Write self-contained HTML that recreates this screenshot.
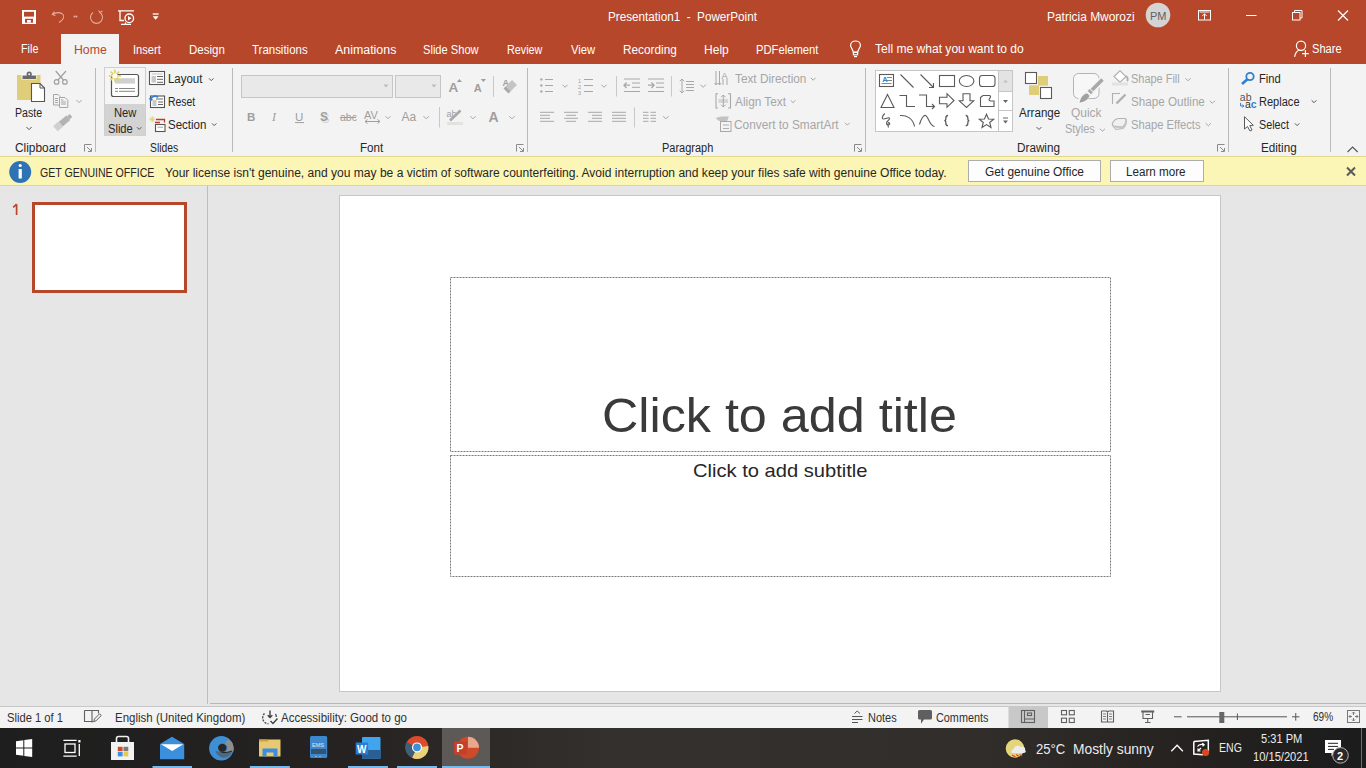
<!DOCTYPE html>
<html><head><meta charset="utf-8">
<style>
*{margin:0;padding:0;box-sizing:border-box}
html,body{width:1366px;height:768px;overflow:hidden;font-family:"Liberation Sans",sans-serif;background:#e6e6e6;position:relative}
.a{position:absolute}
.t{position:absolute;white-space:pre;transform-origin:0 0}
#title{left:0;top:0;width:1366px;height:64px;background:#b7472a}
#hometab{left:61px;top:34px;width:58px;height:30px;background:#f3f3f3}
#ribbon{left:0;top:64px;width:1366px;height:92px;background:#f3f3f3}
#gen{left:0;top:156px;width:1366px;height:30px;background:#fbf5b6;border-top:1px solid #e3d78c;border-bottom:1px solid #e3d78c}
#pane{left:0;top:186px;width:208px;height:520px;background:#e6e6e6}
#slide{left:339px;top:195px;width:882px;height:497px;background:#fff;border:1px solid #c6c6c6}
#status{left:0;top:706px;width:1366px;height:22px;background:#f3f3f3;border-top:1px solid #c8c8c8}
#task{left:0;top:728px;width:1366px;height:40px;background:linear-gradient(90deg,#1e1e1e 0%,#252221 25%,#33302d 45%,#322e2b 70%,#262321 85%,#1c1c1c 100%)}

</style></head><body>
<div class="a" id="title"></div>
<div class="a" id="hometab"></div>
<div class="a" id="ribbon"></div>
<div class="a" id="gen"></div>
<div class="a" id="pane"></div>
<div class="a" id="slide"></div>
<div class="a" id="status"></div>
<div class="a" id="task"></div>

<svg class="a" style="left:0;top:0" width="1366" height="768" viewBox="0 0 1366 768">
<g id="qat">
<rect x="22" y="10" width="14" height="14" fill="#fff"/>
<rect x="24" y="11.8" width="10" height="4.8" fill="#b7472a"/>
<rect x="25" y="18.8" width="8" height="3.9" fill="#b7472a"/>
<rect x="27" y="20" width="3.8" height="2.7" fill="#fff"/>
<g fill="none" stroke="#fff" stroke-opacity="0.55" stroke-width="1.1">
<path d="M52 14.5 L54.5 11.5 M52 14.5 L55.5 15.5 M52.5 14.3 C56 12 61 12 63 14.5 C65 17 63 20 59 22.5"/>
<circle cx="74.5" cy="16.5" r="0.5"/><circle cx="76.5" cy="16.5" r="0.5"/>
<path d="M93 12.5 A6 6 0 1 0 100 12.5 M98.5 10.5 L100 12.5 L102.5 11"/>
</g>
<g fill="none" stroke="#fff" stroke-width="1.3">
<path d="M118 10.8 H134 M120 11 V20.5 H124"/>
<circle cx="129.3" cy="18.3" r="4.3"/>
<path d="M121 24.3 H131 M125.5 22.5 V24"/>
</g>
<path d="M128 16 L131.5 18.3 L128 20.6 Z" fill="#fff"/>
<path d="M152.7 14 H158.6" stroke="#fff" stroke-width="1.3"/>
<path d="M152.7 16.2 H158.6 L155.65 19.8 Z" fill="#fff"/>
</g>
<g id="winctl">
<circle cx="1158" cy="15" r="12.3" fill="#d4d4d4"/>
<g fill="none" stroke="#fff" stroke-width="1">
<rect x="1198.5" y="10.5" width="12" height="9.5"/>
<path d="M1199.5 12 H1209.5"/>
<path d="M1204.5 19.5 V13.8 M1202.3 16 L1204.5 13.8 L1206.7 16"/>
<path d="M1246 15.5 H1256.5"/>
<rect x="1292.5" y="12.5" width="7.5" height="7.5"/>
<path d="M1294.5 12.5 V10.5 H1302 V18 H1300"/>
<path d="M1338 10.5 L1348 20.5 M1348 10.5 L1338 20.5" stroke-width="1.2"/>
</g>
</g>
<g id="tellshare" fill="none" stroke="#fff" stroke-width="1.2">
<path d="M853.3 52.2 C853 49.5 850.6 48 850.6 45.2 C850.6 42.7 852.8 41 855.5 41 C858.2 41 860.4 42.7 860.4 45.2 C860.4 48 858 49.5 857.7 52.2 Z"/>
<rect x="853.4" y="52.4" width="4.2" height="2.4"/>
<path d="M854 56.6 H857"/>
<circle cx="1301" cy="45.7" r="4.6"/>
<path d="M1294.6 56.8 C1295.2 53 1297 50.8 1299.5 50"/>
<path d="M1302 53.6 H1308.8 M1305.4 50 V57"/>
</g>
<path d="M95.5 68 V152" stroke="#b9b9b9" stroke-width="1"/>
<path d="M232.5 68 V152" stroke="#b9b9b9" stroke-width="1"/>
<path d="M527.5 68 V152" stroke="#b9b9b9" stroke-width="1"/>
<path d="M865.5 68 V152" stroke="#b9b9b9" stroke-width="1"/>
<path d="M1228.5 68 V152" stroke="#b9b9b9" stroke-width="1"/>
<path d="M1330.5 68 V152" stroke="#b9b9b9" stroke-width="1"/>
<g id="clip">
<rect x="17" y="75" width="23.5" height="25" fill="#e0cd7a"/>
<rect x="21.5" y="74.5" width="15" height="5" fill="#fff"/>
<rect x="22.5" y="75.5" width="13.5" height="3.5" fill="#6a6a6a"/>
<circle cx="29.2" cy="74.2" r="2.6" fill="#6a6a6a"/>
<circle cx="29.2" cy="74.2" r="1" fill="#f3f3f3"/>
<path d="M31.5 83.5 H40 L44.5 88 V101.5 H31.5 Z" fill="#fff" stroke="#555555" stroke-width="1.1"/>
<path d="M40 83.5 V88 H44.5" fill="none" stroke="#555555" stroke-width="1"/>
<path d="M26.4 126.97500000000001 L29.049999999999997 129.625 L31.7 126.97500000000001" fill="none" stroke="#555555" stroke-width="1.0"/>
<g fill="none" stroke="#a0a0a0" stroke-width="1.2">
<circle cx="56.6" cy="81.9" r="2.3"/><circle cx="64.9" cy="81.9" r="2.3"/>
<path d="M58 80 L66 71 M63.5 80 L55.7 71"/>
</g>
<g fill="#f3f3f3" stroke="#a6a6a6" stroke-width="1">
<path d="M53.5 94.5 H58 L60 96.5 V105 H53.5 Z"/>
<path d="M59.5 97.5 H65 L67.8 100.3 V107.5 H59.5 Z"/>
<path d="M55 98.5 H58 M55 100.5 H58 M55 102.5 H58 M61 102 H66 M61 104 H66 M61 100 H63.5" />
</g>
<path d="M76.4 99.975 L79.05000000000001 102.625 L81.7 99.975" fill="none" stroke="#a6a6a6" stroke-width="1.0"/>
<g transform="translate(61.5,123.5) rotate(-40)">
<rect x="-1" y="-3" width="10" height="6" fill="#b3b3b3"/>
<rect x="9" y="-2" width="3.5" height="4" fill="#b3b3b3"/>
<rect x="-8" y="-3.5" width="7" height="7" fill="#d0d0d0"/>
</g>
<g fill="none" stroke="#8a8a8a" stroke-width="1"><path d="M84.5 151.5 V144.5 H91.5"/><path d="M87 147 L91 151 M91.5 148 V151.5 H88"/></g>
</g>
<g id="slides">
<rect x="104.5" y="67.5" width="41" height="68" fill="#f5f5f5" stroke="#cfcfcf" stroke-width="1"/>
<rect x="105" y="104" width="40" height="31.5" fill="#d3d3d3"/>
<rect x="111.5" y="74.5" width="27" height="22" rx="2" fill="#fff" stroke="#555555" stroke-width="1.2"/>
<rect x="115" y="78.2" width="20" height="5.4" fill="#d0d0d0"/>
<path d="M115 88.5 H118 M119 88.5 H135 M115 91.3 H118 M119 91.3 H135" stroke="#777" stroke-width="0.9"/>
<g stroke="#e3d56a" stroke-width="1.8">
<path d="M114.9 69.8 V81.8 M108.9 75.8 H120.9 M110.7 71.6 L119.1 80 M119.1 71.6 L110.7 80"/>
</g>
<circle cx="114.9" cy="75.8" r="2.5" fill="#fff"/>
<path d="M137 127.22500000000001 L139.15 129.375 L141.3 127.22500000000001" fill="none" stroke="#555555" stroke-width="1.0"/>
<rect x="149.5" y="71.5" width="15" height="13" fill="#fff" stroke="#555555" stroke-width="1.1"/>
<path d="M151.5 74 H162.5" stroke="#bdbdbd" stroke-width="1"/>
<rect x="151.5" y="76" width="4.5" height="6.5" fill="#c8c8c8"/>
<path d="M157 76.5 H163 M157 79.3 H163 M157 82.3 H163" stroke="#555555" stroke-width="0.9"/>
<path d="M209 78.375 L211.25 80.625 L213.5 78.375" fill="none" stroke="#555555" stroke-width="1.0"/>
<rect x="150.5" y="96" width="14" height="11.5" fill="#fff" stroke="#555555" stroke-width="1.1"/>
<rect x="152.5" y="100" width="4" height="6" fill="#c8c8c8"/>
<path d="M158 102 H163 M158 104.5 H163 M156 99 H163" stroke="#555555" stroke-width="0.9"/>
<path d="M150.5 100 C151.5 96.5 155 95 158 97.3" fill="none" stroke="#2f7fd0" stroke-width="1.6"/>
<path d="M149 97.8 L150.3 101.5 L153.2 99.5 Z" fill="#2f7fd0"/>
<g stroke="#e3d56a" stroke-width="1"><path d="M152.3 116.3 V122.3 M149.3 119.3 H155.3 M150.2 117.2 L154.4 121.4 M154.4 117.2 L150.2 121.4"/></g>
<path d="M156 119.5 H164.5 V122.5 M155 122.5 H160" fill="none" stroke="#c0392b" stroke-width="1.3"/>
<rect x="155.5" y="124.5" width="9.5" height="7" fill="#fff" stroke="#555555" stroke-width="1.1"/>
<path d="M157.5 127.3 H163" stroke="#c0c0c0" stroke-width="1.5"/>
<path d="M212 123.4 L214.2 125.6 L216.4 123.4" fill="none" stroke="#555555" stroke-width="1.0"/>
</g>
<g id="font">
<rect x="241.5" y="75.5" width="151" height="22" fill="#e9e9e9" stroke="#c6c6c6"/>
<path d="M383.5 84.5 H388.5 L386 87.5 Z" fill="#bcbcbc"/>
<rect x="395.5" y="75.5" width="45" height="22" fill="#e9e9e9" stroke="#c6c6c6"/>
<path d="M431.5 84.5 H436.5 L434 87.5 Z" fill="#bcbcbc"/>
<text x="448.6" y="92" font-family="Liberation Sans" font-size="13.5" fill="#9e9e9e" font-weight="bold">A</text>
<path d="M456.8 82 H462 L459.4 79 Z" fill="#9e9e9e"/>
<text x="473.8" y="92" font-family="Liberation Sans" font-size="11" fill="#9e9e9e" font-weight="bold">A</text>
<path d="M480.8 79 H486 L483.4 82 Z" fill="#9e9e9e"/>
<path d="M493.5 76 V97" stroke="#c8c8c8" stroke-width="1"/>
<text x="502.5" y="86" font-family="Liberation Sans" font-size="9" fill="#9e9e9e" font-weight="bold">A</text>
<g transform="translate(511,86) rotate(-45)"><rect x="-4" y="-3.5" width="9" height="7" fill="#c4c4c4"/><rect x="-7" y="-3.5" width="3" height="7" fill="#a8a8a8"/></g>
<text x="247" y="121" font-family="Liberation Sans" font-size="11.5" fill="#9e9e9e" font-weight="bold">B</text>
<text x="272" y="121" font-family="Liberation Serif" font-style="italic" font-size="12" fill="#9e9e9e">I</text>
<text x="295" y="120.5" font-family="Liberation Sans" font-size="11.5" fill="#9e9e9e" >U</text>
<path d="M295 122.6 H304" stroke="#9e9e9e" stroke-width="1"/>
<text x="321.5" y="122.5" font-family="Liberation Sans" font-size="12" fill="#b0b0b0" fill-opacity="0.5">S</text>
<text x="320" y="121" font-family="Liberation Sans" font-size="12" fill="#9e9e9e" font-weight="bold">S</text>
<text x="340" y="121" font-family="Liberation Sans" font-size="10.5" fill="#9e9e9e" >abc</text>
<path d="M340 117.5 H356" stroke="#9e9e9e" stroke-width="1"/>
<text x="364" y="119" font-family="Liberation Sans" font-size="11" fill="#9e9e9e" >AV</text>
<path d="M365 121.5 H380 M367.5 119.5 L365 121.5 L367.5 123.5 M377.5 119.5 L380 121.5 L377.5 123.5" fill="none" stroke="#9e9e9e" stroke-width="1"/>
<path d="M385.6 116.275 L388.05 118.725 L390.5 116.275" fill="none" stroke="#a6a6a6" stroke-width="1.0"/>
<text x="401.5" y="121" font-family="Liberation Sans" font-size="12" fill="#9e9e9e" >Aa</text>
<path d="M423.5 116.125 L426.25 118.875 L429 116.125" fill="none" stroke="#a6a6a6" stroke-width="1.0"/>
<path d="M439.5 107 V127.5" stroke="#c8c8c8" stroke-width="1"/>
<text x="446.5" y="117" font-family="Liberation Sans" font-size="9" fill="#9e9e9e" >ab</text>
<path d="M450 120.5 L460.5 110.5" stroke="#a8a8a8" stroke-width="2.6"/>
<rect x="447" y="122" width="16" height="3" fill="#e2e2e2"/>
<path d="M470.3 116.15 L473.0 118.85 L475.7 116.15" fill="none" stroke="#a6a6a6" stroke-width="1.0"/>
<text x="488.5" y="122" font-family="Liberation Sans" font-size="14" fill="#9e9e9e" font-weight="bold">A</text>
<path d="M509.2 116.14999999999999 L511.9 118.85000000000001 L514.6 116.14999999999999" fill="none" stroke="#a6a6a6" stroke-width="1.0"/>
<g fill="none" stroke="#8a8a8a" stroke-width="1"><path d="M516.5 151.5 V144.5 H523.5"/><path d="M519 147 L523 151 M523.5 148 V151.5 H520"/></g>
</g>
<g id="para">
<circle cx="541.4" cy="79.4" r="1.2" fill="#a8a8a8"/><circle cx="541.4" cy="85.5" r="1.2" fill="#a8a8a8"/><circle cx="541.4" cy="91.5" r="1.2" fill="#a8a8a8"/>
<path d="M545 79.5 H553" stroke="#a8a8a8" stroke-width="1.0"/><path d="M545 85.5 H553" stroke="#a8a8a8" stroke-width="1.0"/><path d="M545 91.5 H553" stroke="#a8a8a8" stroke-width="1.0"/>
<path d="M562.6 84.725 L565.1500000000001 87.275 L567.7 84.725" fill="none" stroke="#a6a6a6" stroke-width="1.0"/>
<text x="578" y="82.5" font-family="Liberation Sans" font-size="5.5" fill="#9e9e9e" >1</text><text x="578" y="88.5" font-family="Liberation Sans" font-size="5.5" fill="#9e9e9e" >2</text><text x="578" y="94.5" font-family="Liberation Sans" font-size="5.5" fill="#9e9e9e" >3</text>
<path d="M584 79.5 H593" stroke="#a8a8a8" stroke-width="1.0"/><path d="M584 85.5 H593" stroke="#a8a8a8" stroke-width="1.0"/><path d="M584 91.5 H593" stroke="#a8a8a8" stroke-width="1.0"/>
<path d="M601.5 84.75 L604.0 87.25 L606.5 84.75" fill="none" stroke="#a6a6a6" stroke-width="1.0"/>
<path d="M616.5 76 V96.5" stroke="#c8c8c8" stroke-width="1"/>
<path d="M624 79 H640" stroke="#a8a8a8" stroke-width="1.0"/><path d="M624 91.5 H640" stroke="#a8a8a8" stroke-width="1.0"/><path d="M632 83 H640" stroke="#a8a8a8" stroke-width="1.0"/><path d="M632 87.3 H640" stroke="#a8a8a8" stroke-width="1.0"/>
<path d="M624 85.2 H630 M626.5 82.5 L624 85.2 L626.5 88" fill="none" stroke="#a8a8a8" stroke-width="1.3"/>
<path d="M648 79 H664" stroke="#a8a8a8" stroke-width="1.0"/><path d="M648 91.5 H664" stroke="#a8a8a8" stroke-width="1.0"/><path d="M656 83 H664" stroke="#a8a8a8" stroke-width="1.0"/><path d="M656 87.3 H664" stroke="#a8a8a8" stroke-width="1.0"/>
<path d="M648 85.2 H654 M651.5 82.5 L654 85.2 L651.5 88" fill="none" stroke="#a8a8a8" stroke-width="1.3"/>
<path d="M671.5 76 V96.5" stroke="#c8c8c8" stroke-width="1"/>
<path d="M682 79 V93 M679.8 81.3 L682 79 L684.2 81.3 M679.8 90.7 L682 93 L684.2 90.7" fill="none" stroke="#a8a8a8" stroke-width="1"/>
<path d="M686 81.5 H694" stroke="#a8a8a8" stroke-width="1.0"/><path d="M686 84.5 H694" stroke="#a8a8a8" stroke-width="1.0"/><path d="M686 87.5 H694" stroke="#a8a8a8" stroke-width="1.0"/><path d="M686 90.5 H694" stroke="#a8a8a8" stroke-width="1.0"/>
<path d="M700.4 84.65 L703.0999999999999 87.35 L705.8 84.65" fill="none" stroke="#a6a6a6" stroke-width="1.0"/>
<path d="M540 112.3 H554" stroke="#a8a8a8" stroke-width="1.0"/><path d="M540 121.3 H554" stroke="#a8a8a8" stroke-width="1.0"/><path d="M540 115.3 H550" stroke="#a8a8a8" stroke-width="1.0"/><path d="M540 118.3 H550" stroke="#a8a8a8" stroke-width="1.0"/>
<path d="M564 112.3 H578" stroke="#a8a8a8" stroke-width="1.0"/><path d="M564 118.3 H578" stroke="#a8a8a8" stroke-width="1.0"/><path d="M566 115.3 H576" stroke="#a8a8a8" stroke-width="1.0"/><path d="M566 121.3 H576" stroke="#a8a8a8" stroke-width="1.0"/>
<path d="M588 112.3 H602" stroke="#a8a8a8" stroke-width="1.0"/><path d="M588 121.3 H602" stroke="#a8a8a8" stroke-width="1.0"/><path d="M592 115.3 H602" stroke="#a8a8a8" stroke-width="1.0"/><path d="M592 118.3 H602" stroke="#a8a8a8" stroke-width="1.0"/>
<path d="M612 112.3 H626" stroke="#a8a8a8" stroke-width="1.0"/><path d="M612 115.3 H626" stroke="#a8a8a8" stroke-width="1.0"/><path d="M612 118.3 H626" stroke="#a8a8a8" stroke-width="1.0"/><path d="M612 121.3 H626" stroke="#a8a8a8" stroke-width="1.0"/>
<path d="M634.5 107.5 V127.5" stroke="#c8c8c8" stroke-width="1"/>
<path d="M643 112.3 H648.5" stroke="#a8a8a8" stroke-width="1.0"/><path d="M643 115.3 H648.5" stroke="#a8a8a8" stroke-width="1.0"/><path d="M643 118.3 H648.5" stroke="#a8a8a8" stroke-width="1.0"/><path d="M643 121.3 H648.5" stroke="#a8a8a8" stroke-width="1.0"/><path d="M650.5 112.3 H656" stroke="#a8a8a8" stroke-width="1.0"/><path d="M650.5 115.3 H656" stroke="#a8a8a8" stroke-width="1.0"/><path d="M650.5 118.3 H656" stroke="#a8a8a8" stroke-width="1.0"/><path d="M650.5 121.3 H656" stroke="#a8a8a8" stroke-width="1.0"/>
<path d="M663.1 116.125 L665.85 118.875 L668.6 116.125" fill="none" stroke="#a6a6a6" stroke-width="1.0"/>
<path d="M716 71 V85 M719.5 71 V85 M716 85 L714.5 83 M716 85 L717.5 83 M719.5 85 L718 83 M719.5 85 L721 83 M723 79 V85 M727 79 V85" fill="none" stroke="#a8a8a8" stroke-width="1"/>
<text x="721.5" y="78.5" font-family="Liberation Sans" font-size="9" fill="#9e9e9e" >A</text>
<path d="M810.7 77.75 L813.2 80.25 L815.7 77.75" fill="none" stroke="#a6a6a6" stroke-width="1.0"/>
<path d="M718 93.8 H716 V108 H718 M728 93.8 H730.5 V108 H728" fill="none" stroke="#a8a8a8" stroke-width="1.1"/>
<path d="M723.3 95 V107 M721 97.3 L723.3 95 L725.6 97.3 M721 104.7 L723.3 107 L725.6 104.7" fill="none" stroke="#a8a8a8" stroke-width="1"/>
<path d="M718.5 100 H728" stroke="#a8a8a8" stroke-width="0.8"/><path d="M718.5 102 H728" stroke="#a8a8a8" stroke-width="0.8"/>
<path d="M790.7 100.30000000000001 L793.1 102.69999999999999 L795.5 100.30000000000001" fill="none" stroke="#a6a6a6" stroke-width="1.0"/>
<path d="M715.5 118 L721 116.5 L729 116.5 L727 121 L719 121 Z" fill="#c2c2c2"/>
<rect x="720.5" y="121.5" width="10.5" height="10" fill="#f3f3f3" stroke="#a8a8a8" stroke-width="1"/>
<path d="M723 125 H729" stroke="#a8a8a8" stroke-width="0.9"/><path d="M723 128.5 H729" stroke="#a8a8a8" stroke-width="0.9"/>
<path d="M845 122.85 L847.3 125.15 L849.6 122.85" fill="none" stroke="#a6a6a6" stroke-width="1.0"/>
<g fill="none" stroke="#8a8a8a" stroke-width="1"><path d="M854.5 151.5 V144.5 H861.5"/><path d="M857 147 L861 151 M861.5 148 V151.5 H858"/></g>
</g>
<g id="draw">
<rect x="875.5" y="70.5" width="137" height="61" fill="#fff" stroke="#c6c6c6"/>
<rect x="998.5" y="70.5" width="14" height="21" fill="#e3e3e3" stroke="#c6c6c6"/>
<rect x="998.5" y="91.5" width="14" height="19" fill="#fff" stroke="#c6c6c6"/>
<rect x="998.5" y="110.5" width="14" height="21" fill="#fff" stroke="#c6c6c6"/>
<path d="M1003 82.5 H1008 L1005.5 79.5 Z" fill="#c4c4c4"/>
<path d="M1003 100 H1008 L1005.5 103 Z" fill="#666"/>
<path d="M1003 118 H1008" stroke="#666" stroke-width="1"/>
<path d="M1003 120.5 H1008 L1005.5 123.5 Z" fill="#666"/>
<g fill="none" stroke="#5a5a5a" stroke-width="1.1">
<rect x="879.5" y="74.5" width="14" height="12"/>
<path d="M887 77.5 H892 M887 80.5 H892 M881.5 83.5 H891.5" stroke="#777" stroke-width="0.9"/>
<path d="M900.5 74.5 L913.5 87.5"/>
<path d="M920.5 74.5 L933.5 87.5 M933.5 83 V87.5 H929"/>
<rect x="939.5" y="75.5" width="15" height="11"/>
<ellipse cx="966.6" cy="81" rx="7.3" ry="5.5"/>
<rect x="979.5" y="75.5" width="15.5" height="11" rx="2.8"/>
<path d="M887.5 94.5 L894 107.5 H881 Z"/>
<path d="M899.5 95.5 H906.5 V106.5 H915"/>
<path d="M919 95 H926.5 V106.5 H934.5 M932 104 L934.5 106.5 L932 109"/>
<path d="M939.5 97.3 H947 V93.7 L954 100.5 L947 107.3 V103.7 H939.5 Z"/>
<path d="M963 93.8 H970 V100.8 H973.7 L966.5 107.5 L959.3 100.8 H963 Z"/>
<path d="M980.5 97.5 L983 95.5 H989 C991 95.5 991 97 989.5 98.5 C988.5 99.8 989 101 991 101 H994 V106.5 H980.5 Z"/>
<path d="M884.8 113.5 C882 116 881.5 119 883.5 119 C886 119 889.5 116.5 889.5 118.5 C889.5 120.5 885.5 121.5 886.5 124 C887.5 126 890.5 125 889.5 123 C888.5 121.5 887 124 888.5 127.5"/>
<path d="M900 115.5 C906 115 913 118 914.5 126.5"/>
<path d="M919.5 124.5 C921 119 923.5 114.8 925.5 115.5 C928.5 116.5 929.5 126 934.5 126.5"/>
<path d="M948 115.5 C946 115.5 945.8 116.5 945.8 118.5 V119.5 C945.8 120.3 945 120.6 944.3 120.6 C945 120.6 945.8 121 945.8 121.8 V123 C945.8 125 946 125.7 948 125.7" stroke-width="1.3"/>
<path d="M965.7 115.5 C967.7 115.5 967.9 116.5 967.9 118.5 V119.5 C967.9 120.3 968.7 120.6 969.4 120.6 C968.7 120.6 967.9 121 967.9 121.8 V123 C967.9 125 967.7 125.7 965.7 125.7" stroke-width="1.3"/>
<path d="M986.5 114.2 L988.5 119 L993.7 119.2 L989.7 122.5 L991 127.5 L986.5 124.6 L982 127.5 L983.3 122.5 L979.3 119.2 L984.5 119 Z"/>
</g>
<text x="882.3" y="81.5" font-family="Liberation Sans" font-weight="bold" font-size="7.5" fill="#2f7fd0">A</text>
<rect x="1025.5" y="72.5" width="11" height="11" fill="#fff" stroke="#5a5a5a" stroke-width="1.1"/>
<rect x="1038" y="76" width="10" height="9.6" fill="#e0cd7a"/>
<rect x="1029" y="85.3" width="10" height="9.7" fill="#e0cd7a"/>
<rect x="1040.5" y="87.5" width="11" height="11" fill="#fff" stroke="#5a5a5a" stroke-width="1.1"/>
<path d="M1036.6 127.09999999999997 L1039.0 129.50000000000006 L1041.4 127.09999999999997" fill="none" stroke="#555555" stroke-width="1.0"/>
<rect x="1073.5" y="73.5" width="25.5" height="25" rx="5" fill="#f7f7f7" stroke="#b4b4b4" stroke-width="1"/>
<path d="M1080 102 L1102.5 79.5" stroke="#f3f3f3" stroke-width="7"/>
<path d="M1092 90 L1102.5 79.5" stroke="#a8a8a8" stroke-width="3.6"/>
<path d="M1089.3 92.7 L1091.3 90.7" stroke="#a8a8a8" stroke-width="4.5"/>
<path d="M1079.5 102.5 C1080.5 97.5 1083 94.5 1087 93.2 L1089.5 95.7 C1088 99.5 1085 101.8 1079.5 102.5 Z" fill="#a0a0a0"/>
<path d="M1099.9 128.72500000000002 L1102.45 131.27499999999998 L1105 128.72500000000002" fill="none" stroke="#a6a6a6" stroke-width="1.0"/>
<path d="M1114 76.5 L1120 70.8 L1126 76.5 L1120 82.2 Z" fill="#fff" stroke="#b0b0b0" stroke-width="1.1"/>
<path d="M1126 76 C1128 78 1128 80 1127 81" stroke="#b0b0b0" stroke-width="2" fill="none"/>
<rect x="1112" y="82.5" width="16" height="3" fill="#e2e2e2"/>
<path d="M1185.5 78.19999999999999 L1188.1 80.80000000000001 L1190.7 78.19999999999999" fill="none" stroke="#a6a6a6" stroke-width="1.0"/>
<path d="M1120 93.5 H1112.5 V104" fill="none" stroke="#b0b0b0" stroke-width="1.1"/>
<path d="M1116.5 103.5 L1125.5 94.5" stroke="#b0b0b0" stroke-width="2.4"/>
<path d="M1209.7 100.69999999999999 L1212.3000000000002 103.30000000000001 L1214.9 100.69999999999999" fill="none" stroke="#a6a6a6" stroke-width="1.0"/>
<path d="M1113 126 C1111 124 1114 119 1118 118.5 L1125.5 118.5 C1127 119.5 1127 125 1123 128.5 L1116 129.5 Z" fill="#f0f0f0" stroke="#b4b4b4" stroke-width="1.1"/>
<path d="M1113.5 126.5 L1122.5 127.3 C1125 126 1126.5 122 1126 119.5" fill="none" stroke="#c4c4c4" stroke-width="2"/>
<path d="M1205.7 123.17500000000001 L1208.35 125.82499999999999 L1211 123.17500000000001" fill="none" stroke="#a6a6a6" stroke-width="1.0"/>
<g fill="none" stroke="#8a8a8a" stroke-width="1"><path d="M1217.5 151.5 V144.5 H1224.5"/><path d="M1220 147 L1224 151 M1224.5 148 V151.5 H1221"/></g>
</g>
<g id="edit">
<circle cx="1250" cy="76.5" r="3.7" fill="none" stroke="#2f7fd0" stroke-width="1.8"/>
<path d="M1247.4 79.2 L1242 84" stroke="#2f7fd0" stroke-width="2.6"/>
<text x="1239.8" y="100.7" font-family="Liberation Sans" font-size="10.5" fill="#555">ab</text>
<text x="1245" y="108" font-family="Liberation Sans" font-size="10.5" fill="#333">a</text>
<text x="1250.8" y="108" font-family="Liberation Sans" font-size="10.5" font-weight="bold" fill="#2f7fd0">c</text>
<path d="M1240.6 102.8 V106 H1243.8 M1242.3 104.5 L1243.8 106 L1242.3 107.5" fill="none" stroke="#2f7fd0" stroke-width="1"/>
<path d="M1311.6 100.29999999999995 L1314.0 102.70000000000005 L1316.4 100.29999999999995" fill="none" stroke="#555555" stroke-width="1.0"/>
<path d="M1244.5 116.7 V129 L1247.5 126.5 L1250 131 L1252 130 L1249.8 125.6 L1253.3 125.3 Z" fill="#fff" stroke="#5a5a5a" stroke-width="1"/>
<path d="M1294.9 123.40000000000003 L1297.1 125.59999999999997 L1299.3 123.40000000000003" fill="none" stroke="#555555" stroke-width="1.0"/>
<path d="M1347.5 152 L1352.6 147 L1357.7 152" fill="none" stroke="#555" stroke-width="1.1"/>
</g>
<g id="yb">
<circle cx="20.2" cy="172" r="11" fill="#2e74b5"/>
<circle cx="20.2" cy="165.5" r="1.6" fill="#fff"/>
<rect x="18.6" y="169" width="3.2" height="9.5" fill="#fff"/>
<rect x="968.5" y="160.5" width="132" height="21" fill="#fdfdfd" stroke="#adadad"/>
<rect x="1110.5" y="160.5" width="93" height="21" fill="#fdfdfd" stroke="#adadad"/>
<path d="M1347 167.5 L1355 175.5 M1355 167.5 L1347 175.5" stroke="#5a5a5a" stroke-width="2"/>
</g>
<g id="pane">
<path d="M207.5 186 V704" stroke="#bdbdbd" stroke-width="1"/>
<path d="M210 703.5 H1366" stroke="#b8b8b8" stroke-width="1"/>
<rect x="33.5" y="203.5" width="152" height="88" fill="#fff" stroke="#b7472a" stroke-width="3"/>
<path d="M16.6 204.2 V215 M13.2 207.3 L16.6 204.2" fill="none" stroke="#b7472a" stroke-width="1.7"/>
<rect x="450.5" y="277.5" width="660" height="174" fill="none" stroke="#7a7a7a" stroke-width="1" stroke-dasharray="2 1"/>
<rect x="450.5" y="455.5" width="660" height="121" fill="none" stroke="#7a7a7a" stroke-width="1" stroke-dasharray="2 1"/>
</g>
<g id="sb">
<rect x="1008.5" y="707" width="39.5" height="21" fill="#c8c8c8"/>
<g fill="none" stroke="#666666" stroke-width="1">
<path d="M84.5 710.5 V721.5 H92 M92 710.5 V722.5 M84.5 710.5 H92 L98.5 710.5 V713.5 M92 721.5 H93.5" stroke="#606060" stroke-width="1.1"/>
<path d="M93.8 721.7 L94.4 719 L99.6 713.8 L101.3 715.5 L96.1 720.7 Z" stroke="#606060" stroke-width="1"/>
<path d="M264.5 713.5 A6 6 0 0 0 268.5 723.8" stroke="#505050" stroke-width="1.4" stroke-dasharray="2 1.2"/>
<path d="M275.5 714 A6 6 0 0 1 276.3 717" stroke="#505050" stroke-width="1.4"/>
<path d="M270 710.5 V717.5 M267.7 715.3 L270 717.5 L272.3 715.3 M270.5 721 L273 723.5 L277.5 718.5" stroke="#404040" stroke-width="1.4"/>
</g>
<g fill="none" stroke="#555" stroke-width="1">
<path d="M852 716.5 H862.5 M852 719.5 H862.5 M852 722.5 H858"/>
<path d="M854.5 713.5 L857.2 711 L860 713.5"/>
</g>
<path d="M919.5 710 H930.5 Q932 710 932 711.5 V718 Q932 719.5 930.5 719.5 H924 L921 723.7 V719.5 H919.5 Q918 719.5 918 718 V711.5 Q918 710 919.5 710 Z" fill="#5f5f5f"/>
<g fill="none" stroke="#606060" stroke-width="1.1">
<rect x="1021.5" y="710.5" width="13" height="12"/>
<path d="M1024.5 710.5 V722.5 M1024.5 719 H1034.5"/>
<rect x="1027.5" y="713" width="4" height="2.5"/>
<rect x="1061.5" y="710.5" width="5" height="4.3"/><rect x="1069.3" y="710.5" width="5" height="4.3"/>
<rect x="1061.5" y="718.2" width="5" height="4.3"/><rect x="1069.3" y="718.2" width="5" height="4.3"/>
<path d="M1101.5 711 V722 H1107.5 M1107.5 711.5 V722.5 M1101.5 711 H1106.5 L1107.5 712 L1108.5 711 H1113.5 V722 H1107.5"/>
<path d="M1103 714 H1106 M1103 716.5 H1106 M1103 719 H1106 M1109 714 H1112 M1109 716.5 H1112 M1109 719 H1112" stroke-width="0.8"/>
<path d="M1143 712 V718.5 H1152.5 V712 M1147.7 718.5 V722.5 M1145 722.5 H1150.5 M1145.5 714.5 H1150"/>
</g>
<rect x="1141.2" y="710.5" width="13" height="2" fill="#606060"/>
<path d="M1174 716.8 H1181.6 M1187 716.8 H1287 M1237.4 713.5 V720 M1292 716.8 H1299.5 M1295.75 713 V720.6" stroke="#555" stroke-width="1"/>
<rect x="1219.3" y="712" width="5" height="11" fill="#666"/>
<g fill="none" stroke="#777" stroke-width="1">
<rect x="1347.5" y="710.5" width="12" height="12"/>
<path d="M1353.5 712 V715 M1352 713.5 L1353.5 712 L1355 713.5 M1353.5 721 V718 M1352 719.5 L1353.5 721 L1355 719.5 M1349 716.5 H1352 M1350.5 715 L1349 716.5 L1350.5 718 M1358 716.5 H1355 M1356.5 715 L1358 716.5 L1356.5 718"/>
</g>
</g>
<g id="tb">
<path d="M16 741.3 L23.3 740.3 V747.5 H16 Z M24.3 740.1 L32.2 739 V747.5 H24.3 Z M16 748.5 H23.3 V755.7 L16 754.7 Z M24.3 748.5 H32.2 V757 L24.3 755.9 Z" fill="#fff"/>
<g fill="none" stroke="#fff" stroke-width="1.3">
<rect x="65" y="744" width="10" height="8.5"/>
<path d="M64 741 V740.3 H76 V741 M64 755.5 V756.2 H76 V755.5"/>
<path d="M79.3 744 V756"/>
</g>
<rect x="78.3" y="740" width="2.2" height="2.5" fill="#fff"/>
<path d="M116.5 742 V738.5 Q116.5 736.5 118.5 736.5 H126.5 Q128.5 736.5 128.5 738.5 V742" fill="none" stroke="#f0f0f0" stroke-width="1.6"/>
<rect x="111" y="742" width="23" height="18" fill="#f2f2f2"/>
<rect x="117.8" y="746.8" width="4.8" height="4.4" fill="#d24726"/>
<rect x="123.5" y="746.8" width="4.8" height="4.4" fill="#7b7b7b"/>
<rect x="117.8" y="752" width="4.8" height="4.4" fill="#3a8ee6"/>
<rect x="123.5" y="752" width="4.8" height="4.4" fill="#e8c94a"/>
<path d="M160 744 L172 736.8 L184.2 744 V759.3 H160 Z" fill="#3c8fdc"/>
<path d="M161 744.2 H183.3 L172.2 751 Z" fill="#fff"/>
<rect x="152.5" y="766" width="39.5" height="2" fill="#76b9ed"/>
<circle cx="221.3" cy="748.3" r="12.2" fill="#3f8fd6"/>
<path d="M215.5 751 C217 757 224 760 229.5 755.5 C231 754 232 752.5 232 751.5 C228 753.5 223 754 219.5 751.5 Z" fill="#4a6a82"/>
<path d="M228.5 739 A12.2 12.2 0 0 1 233.4 751.5 L226.5 751.5 C228 748 227.5 745 225 743 Z" fill="#8e8e8e"/>
<ellipse cx="222.3" cy="747.8" rx="4.3" ry="4" fill="#2a2826"/>
<path d="M221 752 C224 753 228 752.5 232 751" stroke="#2a2826" stroke-width="1.2" fill="none"/>
<rect x="259" y="739.5" width="21.5" height="17" fill="#e8c971"/>
<path d="M259 739.5 H267 L268.5 741.5 H259 Z" fill="#c9a23c"/>
<path d="M262.5 748.5 H277.5 V756.5 H273.5 V752.5 H266.5 V756.5 H262.5 Z" fill="#3a8ee6"/>
<rect x="249.9" y="766" width="40" height="2" fill="#76b9ed"/>
<rect x="310" y="736" width="17.2" height="22" rx="1.5" fill="#3d87cf"/>
<rect x="311" y="749" width="15.2" height="5" fill="#33536e"/>
<text x="312" y="747" font-family="Liberation Sans" font-size="5.5" fill="#e8e8e8">EMS</text>
<circle cx="316" cy="756.3" r="0.6" fill="#ddd"/><circle cx="320" cy="756.3" r="0.6" fill="#ddd"/>
<rect x="362" y="737.1" width="18.5" height="21.7" rx="1" fill="#41a5ee"/>
<rect x="362" y="750" width="18.5" height="8.8" fill="#2b5f94"/>
<rect x="355.7" y="742.5" width="12.5" height="12" fill="#2b7cd3"/>
<text x="357" y="752.7" font-family="Liberation Sans" font-weight="bold" font-size="10" fill="#fff">W</text>
<rect x="348" y="766" width="40" height="2" fill="#76b9ed"/>
<circle cx="417" cy="747.4" r="11.4" fill="#dc4b2c"/>
<path d="M417 747.4 L428.3 746 A11.4 11.4 0 0 1 412 757.7 Z" fill="#e8d27a"/>
<path d="M417 747.4 L412 757.7 A11.4 11.4 0 0 1 406.5 742 Z" fill="#3d5f78"/>
<circle cx="417" cy="747.4" r="5" fill="#fff"/>
<circle cx="417" cy="747.4" r="3.8" fill="#3c8fdc"/>
<rect x="397" y="766" width="40" height="2" fill="#76b9ed"/>
<rect x="442" y="728" width="48" height="40" fill="#5d5956"/>
<circle cx="468" cy="747.8" r="11" fill="#cf4a2a"/>
<path d="M468 736.8 A11 11 0 0 1 479 747.8 H468 Z" fill="#e8a88e"/>
<rect x="454" y="741.5" width="13" height="13" fill="#c4402a"/>
<text x="456.6" y="752.2" font-family="Liberation Sans" font-weight="bold" font-size="10.5" fill="#fff">P</text>
<rect x="442" y="766" width="48" height="2" fill="#76b9ed"/>
<circle cx="1015" cy="748.5" r="9.3" fill="#e3d67a"/>
<path d="M1013 753 C1011 753 1011 749.5 1013.5 749.3 C1014 746 1018.5 744.5 1020.5 747 C1023 745.5 1026 747.5 1025 750 C1026.5 751 1025.5 753 1024 753 Z" fill="#ececec"/>
<path d="M1012 755 L1015.5 757 M1016 754.5 L1019 756.5 M1019.5 754.5 L1022 756" stroke="#d9481f" stroke-width="1.3"/>
<path d="M1171.3 751.3 L1177.1 745.3 L1182.9 751.3" fill="none" stroke="#fff" stroke-width="1.3"/>
<path d="M1193.8 741.5 L1208.3 740.2 V752 M1193.8 741.5 V754 L1203 754.8" fill="none" stroke="#fff" stroke-width="1.5"/>
<path d="M1197.5 746.5 C1198.5 744.5 1201 744 1203.5 744.5 M1202.3 743.2 L1204.2 744.7 L1202.5 746.3 M1198 748.5 V751 H1200.5 M1198 751 L1201 748" fill="none" stroke="#fff" stroke-width="1.2"/>
<circle cx="1205.6" cy="752.5" r="3.6" fill="#d9481f"/>
<path d="M1325 740 H1341 V753 H1334.5 L1331.5 756.2 V753 H1325 Z" fill="#fff"/>
<path d="M1328 743.3 H1338 M1328 746.4 H1338 M1328 749.4 H1334" stroke="#222" stroke-width="1"/>
<circle cx="1340.5" cy="755.4" r="7.8" fill="#2b2827" stroke="#b5b5b5" stroke-width="1"/>
<text x="1337" y="759.6" font-family="Liberation Sans" font-weight="bold" font-size="11" fill="#fff">2</text>
<path d="M1361.5 728 V768" stroke="#6f6f6f" stroke-width="1"/>
</g>
</svg>
<div class="t" id="t_title" style="left:607.75px;top:10.00px;font-size:12px;line-height:14px;color:#ffffff;transform:scaleX(0.9748);">Presentation1  -  PowerPoint</div>
<div class="t" id="t_user" style="left:1047.19px;top:10.00px;font-size:12px;line-height:14px;color:#ffffff;transform:scaleX(0.9955);">Patricia Mworozi</div>
<div class="t" id="t_pm" style="left:1150.00px;top:10.00px;font-size:11px;line-height:12px;color:#5f5f5f;transform:scaleX(1.0000);">PM</div>
<div class="t" id="t_file" style="left:20.62px;top:42.00px;font-size:12px;line-height:14px;color:#ffffff;transform:scaleX(0.9008);">File</div>
<div class="t" id="t_home" style="left:73.56px;top:43.00px;font-size:12px;line-height:14px;color:#b7472a;transform:scaleX(1.0238);">Home</div>
<div class="t" id="t_insert" style="left:132.78px;top:43.00px;font-size:12px;line-height:14px;color:#ffffff;transform:scaleX(0.9272);">Insert</div>
<div class="t" id="t_design" style="left:188.77px;top:43.00px;font-size:12px;line-height:14px;color:#ffffff;transform:scaleX(0.9596);">Design</div>
<div class="t" id="t_trans" style="left:252.38px;top:43.00px;font-size:12px;line-height:14px;color:#ffffff;transform:scaleX(0.9552);">Transitions</div>
<div class="t" id="t_anim" style="left:335.02px;top:43.00px;font-size:12px;line-height:14px;color:#ffffff;transform:scaleX(1.0336);">Animations</div>
<div class="t" id="t_show" style="left:423.16px;top:43.00px;font-size:12px;line-height:14px;color:#ffffff;transform:scaleX(0.9263);">Slide Show</div>
<div class="t" id="t_review" style="left:507.02px;top:43.00px;font-size:12px;line-height:14px;color:#ffffff;transform:scaleX(0.8981);">Review</div>
<div class="t" id="t_view" style="left:571.00px;top:43.00px;font-size:12px;line-height:14px;color:#ffffff;transform:scaleX(0.9386);">View</div>
<div class="t" id="t_rec" style="left:622.78px;top:43.00px;font-size:12px;line-height:14px;color:#ffffff;transform:scaleX(0.9834);">Recording</div>
<div class="t" id="t_help" style="left:704.18px;top:43.00px;font-size:12px;line-height:14px;color:#ffffff;transform:scaleX(1.0046);">Help</div>
<div class="t" id="t_pdf" style="left:756.41px;top:43.00px;font-size:12px;line-height:14px;color:#ffffff;transform:scaleX(0.9344);">PDFelement</div>
<div class="t" id="t_tell" style="left:875.00px;top:42.00px;font-size:12px;line-height:14px;color:#ffffff;transform:scaleX(1.0047);">Tell me what you want to do</div>
<div class="t" id="t_share" style="left:1312.43px;top:42.00px;font-size:12px;line-height:14px;color:#ffffff;transform:scaleX(0.9251);">Share</div>
<div class="t" id="r_paste" style="left:15.40px;top:106.00px;font-size:12px;line-height:14px;color:#262626;transform:scaleX(0.8842);">Paste</div>
<div class="t" id="r_clip" style="left:14.96px;top:141.00px;font-size:12px;line-height:14px;color:#262626;transform:scaleX(0.9890);">Clipboard</div>
<div class="t" id="r_new" style="left:114.21px;top:106.00px;font-size:12px;line-height:14px;color:#262626;transform:scaleX(0.9304);">New</div>
<div class="t" id="r_slide" style="left:107.62px;top:121.50px;font-size:12px;line-height:14px;color:#262626;transform:scaleX(0.9273);">Slide</div>
<div class="t" id="r_layout" style="left:168.00px;top:72.20px;font-size:12px;line-height:14px;color:#262626;transform:scaleX(0.9533);">Layout</div>
<div class="t" id="r_reset" style="left:168.04px;top:95.00px;font-size:12px;line-height:14px;color:#262626;transform:scaleX(0.8682);">Reset</div>
<div class="t" id="r_section" style="left:168.01px;top:117.70px;font-size:12px;line-height:14px;color:#262626;transform:scaleX(0.9597);">Section</div>
<div class="t" id="r_slides" style="left:149.55px;top:141.00px;font-size:12px;line-height:14px;color:#262626;transform:scaleX(0.8640);">Slides</div>
<div class="t" id="r_font" style="left:360.46px;top:141.00px;font-size:12px;line-height:14px;color:#262626;transform:scaleX(0.9673);">Font</div>
<div class="t" id="r_para" style="left:662.48px;top:141.00px;font-size:12px;line-height:14px;color:#262626;transform:scaleX(0.9144);">Paragraph</div>
<div class="t" id="r_tdir" style="left:734.97px;top:72.10px;font-size:12px;line-height:14px;color:#a6a6a6;transform:scaleX(0.9823);">Text Direction</div>
<div class="t" id="r_atext" style="left:734.96px;top:95.00px;font-size:12px;line-height:14px;color:#a6a6a6;transform:scaleX(0.9855);">Align Text</div>
<div class="t" id="r_smart" style="left:734.00px;top:117.80px;font-size:12px;line-height:14px;color:#a6a6a6;transform:scaleX(0.9868);">Convert to SmartArt</div>
<div class="t" id="r_arrange" style="left:1018.57px;top:106.10px;font-size:12px;line-height:14px;color:#262626;transform:scaleX(0.9653);">Arrange</div>
<div class="t" id="r_quick" style="left:1070.57px;top:106.10px;font-size:12px;line-height:14px;color:#a6a6a6;transform:scaleX(0.9938);">Quick</div>
<div class="t" id="r_styles" style="left:1065.39px;top:122.00px;font-size:12px;line-height:14px;color:#a6a6a6;transform:scaleX(0.9128);">Styles</div>
<div class="t" id="r_sfill" style="left:1131.40px;top:72.00px;font-size:12px;line-height:14px;color:#a6a6a6;transform:scaleX(0.9122);">Shape Fill</div>
<div class="t" id="r_sout" style="left:1131.40px;top:95.20px;font-size:12px;line-height:14px;color:#a6a6a6;transform:scaleX(0.9708);">Shape Outline</div>
<div class="t" id="r_seff" style="left:1131.41px;top:118.20px;font-size:12px;line-height:14px;color:#a6a6a6;transform:scaleX(0.9338);">Shape Effects</div>
<div class="t" id="r_drawing" style="left:1017.49px;top:141.00px;font-size:12px;line-height:14px;color:#262626;transform:scaleX(0.9775);">Drawing</div>
<div class="t" id="r_find" style="left:1259.02px;top:72.00px;font-size:12px;line-height:14px;color:#262626;transform:scaleX(0.9307);">Find</div>
<div class="t" id="r_replace" style="left:1259.01px;top:95.00px;font-size:12px;line-height:14px;color:#262626;transform:scaleX(0.9206);">Replace</div>
<div class="t" id="r_select" style="left:1259.01px;top:117.70px;font-size:12px;line-height:14px;color:#262626;transform:scaleX(0.8975);">Select</div>
<div class="t" id="r_editing" style="left:1261.46px;top:141.00px;font-size:12px;line-height:14px;color:#262626;transform:scaleX(0.9726);">Editing</div>
<div class="t" id="y_get" style="left:40.13px;top:166.00px;font-size:12px;line-height:14px;color:#262626;transform:scaleX(0.8808);">GET GENUINE OFFICE</div>
<div class="t" id="y_msg" style="left:165.00px;top:166.00px;font-size:12px;line-height:14px;color:#262626;transform:scaleX(1.0042);">Your license isn't genuine, and you may be a victim of software counterfeiting. Avoid interruption and keep your files safe with genuine Office today.</div>
<div class="t" id="y_b1" style="left:984.59px;top:165.00px;font-size:12px;line-height:14px;color:#262626;transform:scaleX(0.9910);">Get genuine Office</div>
<div class="t" id="y_b2" style="left:1126.40px;top:165.00px;font-size:12px;line-height:14px;color:#262626;transform:scaleX(0.9706);">Learn more</div>
<div class="t" id="s_title" style="left:602.31px;top:389.00px;font-size:48px;line-height:53px;color:#3a3a3a;transform:scaleX(1.0475);">Click to add title</div>
<div class="t" id="s_sub" style="left:692.57px;top:460.00px;font-size:19px;line-height:21px;color:#262626;transform:scaleX(1.0591);">Click to add subtitle</div>
<div class="t" id="b_slide" style="left:7.38px;top:711.00px;font-size:12px;line-height:14px;color:#303030;transform:scaleX(0.9318);">Slide 1 of 1</div>
<div class="t" id="b_lang" style="left:115.22px;top:711.00px;font-size:12px;line-height:14px;color:#303030;transform:scaleX(0.9578);">English (United Kingdom)</div>
<div class="t" id="b_acc" style="left:280.78px;top:711.00px;font-size:12px;line-height:14px;color:#303030;transform:scaleX(0.9591);">Accessibility: Good to go</div>
<div class="t" id="b_notes" style="left:868.40px;top:711.00px;font-size:12px;line-height:14px;color:#303030;transform:scaleX(0.9137);">Notes</div>
<div class="t" id="b_comm" style="left:936.20px;top:711.00px;font-size:12px;line-height:14px;color:#303030;transform:scaleX(0.9035);">Comments</div>
<div class="t" id="b_zoom" style="left:1313.11px;top:710.00px;font-size:12px;line-height:14px;color:#303030;transform:scaleX(0.8365);">69%</div>
<div class="t" id="k_temp" style="left:1035.53px;top:741.00px;font-size:14px;line-height:16px;color:#ececec;transform:scaleX(0.9325);">25°C</div>
<div class="t" id="k_weather" style="left:1073.00px;top:741.00px;font-size:14px;line-height:16px;color:#ececec;transform:scaleX(0.9866);">Mostly sunny</div>
<div class="t" id="k_eng" style="left:1218.75px;top:741.00px;font-size:12px;line-height:14px;color:#ececec;transform:scaleX(0.8774);">ENG</div>
<div class="t" id="k_time" style="left:1261.21px;top:732.00px;font-size:12px;line-height:14px;color:#ececec;transform:scaleX(0.9250);">5:31 PM</div>
<div class="t" id="k_date" style="left:1252.81px;top:750.00px;font-size:12px;line-height:14px;color:#ececec;transform:scaleX(0.9268);">10/15/2021</div>
</body></html>
